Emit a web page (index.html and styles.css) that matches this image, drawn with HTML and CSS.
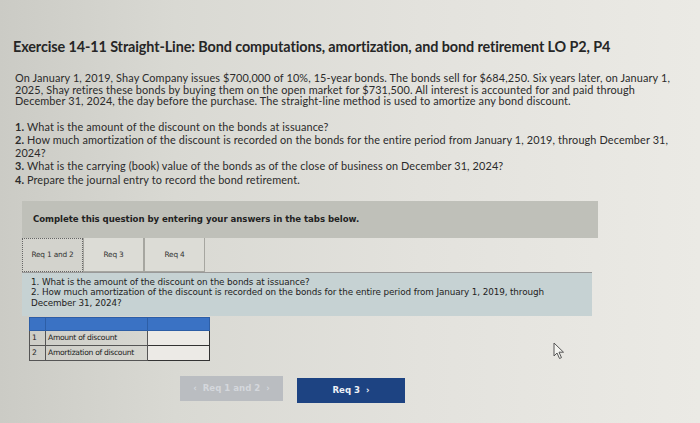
FILE: index.html
```html
<!DOCTYPE html>
<html>
<head>
<meta charset="utf-8">
<link rel="stylesheet" href="styles.css">
</head>
<body>
<div class="page">
  <h1 class="title">Exercise 14-11 Straight-Line: Bond computations, amortization, and bond retirement LO P2, P4</h1>
  <p class="intro">On January 1, 2019, Shay Company issues $700,000 of 10%, 15-year bonds. The bonds sell for $684,250. Six years later, on January 1, 2025, Shay retires these bonds by buying them on the open market for $731,500. All interest is accounted for and paid through December 31, 2024, the day before the purchase. The straight-line method is used to amortize any bond discount.</p>
  <div class="reqs">
    <p>What is the amount of the discount on the bonds at issuance?</p>
    <p>How much amortization of the discount is recorded on the bonds for the entire period from January 1, 2019, through December 31, 2024?</p>
    <p>What is the carrying (book) value of the bonds as of the close of business on December 31, 2024?</p>
    <p>Prepare the journal entry to record the bond retirement.</p>
  </div>

  <div class="panel">
    <div class="banner">Complete this question by entering your answers in the tabs below.</div>
    <div class="tabs">
      <div class="tab active">Req 1 and 2</div>
      <div class="tab">Req 3</div>
      <div class="tab">Req 4</div>
    </div>
    <div class="content">
      <p>1. What is the amount of the discount on the bonds at issuance?</p>
      <p>2. How much amortization of the discount is recorded on the bonds for the entire period from January 1, 2019, through December 31, 2024?</p>
    </div>
    <table class="answers">
      <tr class="head"><th class="num"></th><th class="label"></th><th class="val"></th></tr>
      <tr><td class="num">1</td><td class="label">Amount of discount</td><td class="val"></td></tr>
      <tr><td class="num">2</td><td class="label">Amortization of discount</td><td class="val"></td></tr>
    </table>
    <div class="nav">
      <div class="btn prev">&lsaquo;&nbsp; Req 1 and 2 &nbsp;&rsaquo;</div>
      <div class="btn next">Req 3 &nbsp;&rsaquo;</div>
    </div>
  </div>

  <svg class="cursor" width="12" height="18" viewBox="0 0 12 18">
    <path d="M1 1 L1 14 L4 11 L6.5 16.5 L8.5 15.6 L6 10.2 L10.5 10.2 Z" fill="#f4f4f0" stroke="#555" stroke-width="1"/>
  </svg>
</div>
</body>
</html>
```

FILE: styles.css
```css
* { box-sizing: border-box; }
html, body { margin: 0; padding: 0; }
body {
  width: 700px;
  height: 423px;
  overflow: hidden;
  background: linear-gradient(to right, #cbcbc5 0%, #d9d9d3 25%, #e3e2dd 60%, #ebeae5 100%);
  color: #2b2b2b;
  font-family: Lato, "Open Sans", sans-serif;
}
.page {
  position: relative;
  padding: 38px 0 0 13px;
  height: 423px;
}
.title {
  margin: 0;
  font-size: 14.4px;
  font-weight: 700;
  line-height: 17px;
  letter-spacing: -0.1px;
  color: #262626;
}
.intro {
  margin: 17px 0 0 2px;
  width: 662px;
  font-size: 10.9px;
  line-height: 11.6px;
  letter-spacing: 0.12px;
}
.reqs {
  margin: 13px 0 0 2px;
  width: 668px;
  font-size: 10.9px;
  line-height: 13.2px;
  letter-spacing: 0.12px;
  counter-reset: req;
}
.reqs p { margin: 0; counter-increment: req; }
.reqs p::before { content: counter(req) ". "; font-weight: 700; }

.panel {
  margin: 15px 0 0 9px;
  font-family: "DejaVu Sans", Verdana, sans-serif;
}
.banner {
  width: 576px;
  height: 37px;
  background: #bfc0b9;
  padding: 13px 0 0 11px;
  font-size: 8.6px;
  line-height: 11px;
  font-weight: 700;
  color: #222;
  letter-spacing: -0.05px;
}
.tabs {
  display: flex;
  height: 34px;
}
.tab {
  width: 61px;
  border: 1px solid #a6a6a0;
  border-top: none;
  background: #dcdcd6;
  font-size: 7.4px;
  color: #333;
  display: flex;
  align-items: center;
  justify-content: center;
  letter-spacing: -0.2px;
}
.tab.active {
  border: 1px dotted #666;
  background: #d3d3cd;
}
.content {
  width: 570px;
  height: 44px;
  background: #c6d2d3;
  border-top: 1px solid #999;
  padding: 4px 0 0 9px;
  font-size: 8.8px;
  line-height: 10.4px;
  color: #222;
  letter-spacing: -0.1px;
}
.content p { margin: 0; width: 548px; }
.answers {
  margin: 1px 0 0 7px;
  border-collapse: collapse;
  font-size: 7.6px;
  color: #222;
}
.answers .head th {
  background: #3a72c4;
  height: 13px;
  border: 1px solid #2d5ea6;
  padding: 0;
}
.answers td {
  border: 1px solid #555;
  height: 15px;
  padding: 0 2px;
}
.answers .num { width: 16px; }
.answers .label { width: 102px; letter-spacing: -0.3px; }
.answers .val { width: 62px; background: #eceae6; border: 1.5px solid #333; }
.nav {
  display: flex;
  gap: 14px;
  margin: 15px 0 0 158px;
}
.btn {
  height: 25px;
  display: flex;
  align-items: center;
  justify-content: center;
  font-size: 8.6px;
  font-weight: 700;
  font-family: "DejaVu Sans", sans-serif;
}
.btn.prev {
  width: 103px;
  background: #babdc1;
  color: #d4d7dc;
}
.btn.next {
  width: 108px;
  background: #1d4382;
  color: #eef1f6;
  margin-top: 2px;
}
.cursor {
  position: absolute;
  left: 553px;
  top: 342px;
}
```
